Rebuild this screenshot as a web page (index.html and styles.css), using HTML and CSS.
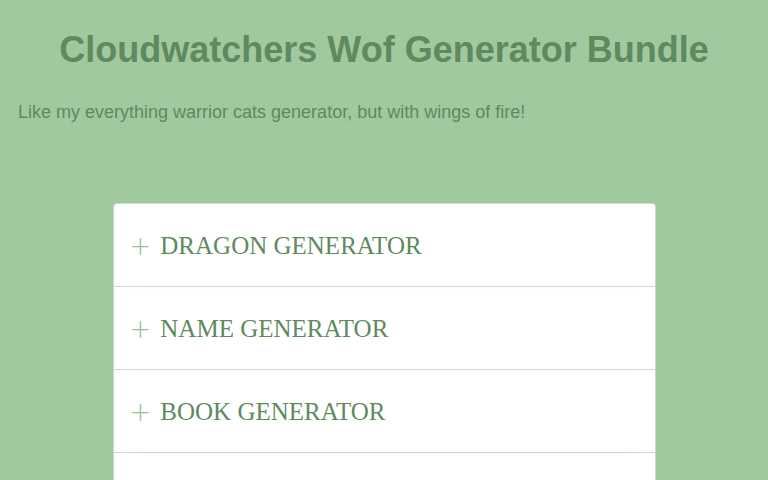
FILE: index.html
```html
<!DOCTYPE html>
<html lang="en">
  <head>
    <meta charset="UTF-8" />
    <meta name="viewport" content="width=device-width, initial-scale=1.0" />
    <title>Cloudwatchers Wof Generator Bundle</title>
    <link rel="stylesheet" href="styles.css">
  </head>
  <body>
    <header class="intro">
      <h1>Cloudwatchers Wof Generator Bundle</h1>
      <p>Like my everything warrior cats generator, but with wings of fire!</p>
    </header>

    <!-- generators -->
    <main class="bundle">
      <div class="gen">
        <div class="gen-head"><span class="plus">+</span> DRAGON GENERATOR</div>
      </div>
      <div class="gen">
        <div class="gen-head"><span class="plus">+</span> NAME GENERATOR</div>
      </div>
      <div class="gen">
        <div class="gen-head"><span class="plus">+</span> BOOK GENERATOR</div>
      </div>
      <div class="gen">
        <div class="gen-head"><span class="plus">+</span> PROPHECY GENERATOR</div>
      </div>
    </main>
  </body>
</html>
```

FILE: styles.css
```css
body {
  margin: 0;
  padding: 8px;
  background: #a0c9a0;
  color: #5e8a5e;
  font-family: "Liberation Sans", Arial, sans-serif;
}
.intro {
  padding: 0 10px;
}
.intro h1 {
  margin: 22px 0 0;
  text-align: center;
  font-size: 36px;
  line-height: 40px;
}
.intro p {
  margin: 31px 0 0;
  font-size: 18px;
  line-height: 22px;
}
.bundle {
  width: 541px;
  margin: 80px auto 0;
  background: #fff;
  border: 1px solid #d2d6d2;
  border-radius: 4px;
}
.gen + .gen {
  border-top: 1px solid #d2d6d2;
}
.gen {
  padding: 0 10px;
}
.gen-head {
  height: 80px;
  padding: 2px 6px 0;
  display: flex;
  align-items: center;
  font-family: "Liberation Serif", "Times New Roman", serif;
  font-size: 25px;
  box-shadow: 0 6px 8px -8px rgba(0, 0, 0, 0.06);
}
.plus {
  color: #97c197;
  font-family: "DejaVu Sans", sans-serif;
  font-weight: 200;
  font-size: 26px;
  margin-right: 9px;
}
```
